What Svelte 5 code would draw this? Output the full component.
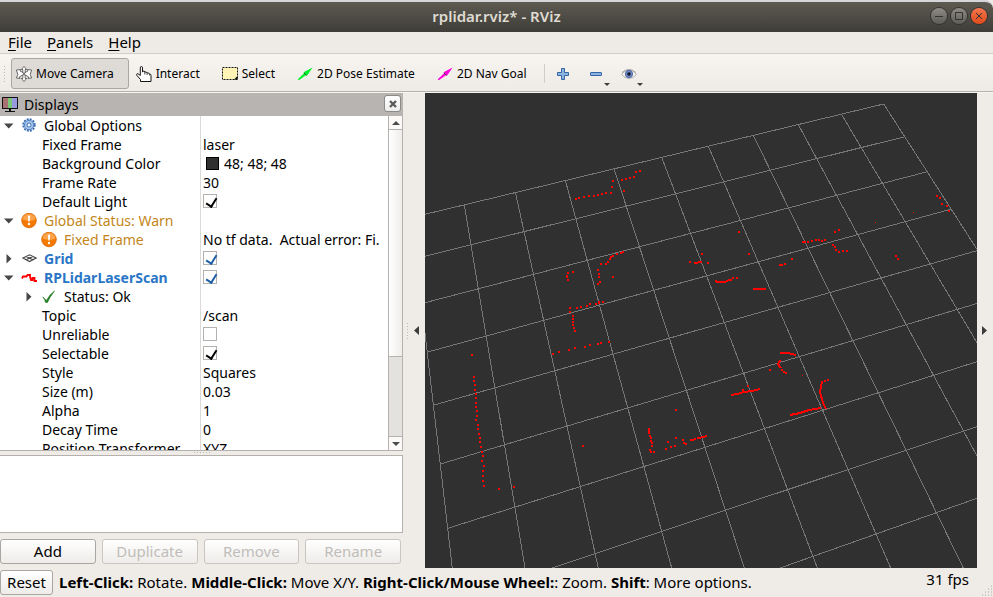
<script>
  const menus = ['File', 'Panels', 'Help'];
  const tools = [
    { icon: 'move', label: 'Move Camera' },
    { icon: 'hand', label: 'Interact' },
    { icon: 'select', label: 'Select' },
    { icon: 'arrow', label: '2D Pose Estimate', color: '#00f02c' },
    { icon: 'arrow', label: '2D Nav Goal', color: '#ff00dc' }
  ];
  let activeTool = $state('Move Camera');

  let rows = $state([
    { level: 0, open: true, icon: 'gear', name: 'Global Options' },
    { level: 1, name: 'Fixed Frame', value: 'laser' },
    { level: 1, name: 'Background Color', value: '48; 48; 48', swatch: true },
    { level: 1, name: 'Frame Rate', value: '30' },
    { level: 1, name: 'Default Light', check: true, on: true },
    { level: 0, open: true, icon: 'warn', name: 'Global Status: Warn', tone: 'warning' },
    { level: 1, icon: 'warn', name: 'Fixed Frame', tone: 'warning', value: 'No tf data.  Actual error: Fi.' },
    { level: 0, open: false, icon: 'grid', name: 'Grid', tone: 'display', check: true, on: true },
    { level: 0, open: true, icon: 'scan', name: 'RPLidarLaserScan', tone: 'display', check: true, on: true },
    { level: 1, open: false, icon: 'ok', name: 'Status: Ok' },
    { level: 1, name: 'Topic', value: '/scan' },
    { level: 1, name: 'Unreliable', check: true, on: false },
    { level: 1, name: 'Selectable', check: true, on: true },
    { level: 1, name: 'Style', value: 'Squares' },
    { level: 1, name: 'Size (m)', value: '0.03' },
    { level: 1, name: 'Alpha', value: '1' },
    { level: 1, name: 'Decay Time', value: '0' },
    { level: 1, name: 'Position Transformer', value: 'XYZ' }
  ]);

  const gridLines = [
    [0, 121.3, 458.7, 11], [0, 163.3, 478.7, 44], [0, 209.7, 502.3, 78.7], [2.7, 259, 526.7, 116],
    [8.3, 312.3, 552, 157.7], [15.3, 371, 552, 210.5], [22.7, 435.3, 552, 268.7],
    [126.7, 475, 552, 333.7], [355, 475, 552, 405.3],
    [0, 240, 27.3, 475], [39.3, 112, 100, 475], [90.3, 99, 173.3, 475], [140.3, 87.3, 246.7, 475],
    [189, 75.7, 319.3, 475], [236.7, 64.3, 392.3, 475], [283.3, 53.3, 465.7, 475],
    [328.3, 42.3, 538.3, 475], [373, 31, 552, 363], [416.3, 21, 552, 249.7], [458.7, 11, 552, 156.3]
  ];

  // Centre of every laser hit.
  const scan = `
    151 106,154 105,159 104,164 103,169 103,173 102,177 101,181 100,186 100,187 94,188 88,199 98,197 87,201 86,205 85,209 84,211 79,215 78,
    198 159,196 160,192 161,188 163,186 164,185 166,183 169,181 171,176 171,173 177,174 181,174 184,175 189,173 191,188 184,
    148 179,143 180,142 183,142 184,143 187,
    178 209,174 210,174 209,171 211,165 211,162 213,156 214,152 215,145 215,145 219,148 223,148 226,148 229,148 232,149 235,150 238,
    128 261,134 259,144 257,150 255,160 254,165 252,173 251,176 250,184 249,47 262,
    49 284,49 288,50 292,50 297,51 301,51 305,51 310,51 314,52 318,52 323,51 327,53 332,53 336,54 341,55 345,55 349,56 354,57 359,
    58 363,57 368,59 373,58 378,58 383,58 388,59 393,74 396,89 394,158 353,251 317,
    224 336,224 338,224 340,225 343,226 345,226 348,227 350,227 353,225 357,226 359,229 359,
    241 356,246 354,250 353,243 349,251 345,258 347,259 350,261 351,266 347,268 347,270 346,273 345,275 345,277 344,279 344,281 343,
    314 139,324 161,277 161,265 169,270 170,272 170,274 169,276 169,283 170,
    291 188,292 189,294 189,296 189,298 189,300 189,302 188,304 187,306 187,308 185,312 185,
    355 172,357 172,360 171,367 166,378 149,380 149,383 149,387 148,391 147,394 147,397 148,400 147,410 139,414 137,
    408 152,410 154,411 157,414 159,418 158,422 158,471 163,473 166,
    512 103,515 105,517 111,522 113,524 118,
    355 268,353 271,354 273,357 277,359 279,361 280,345 277,400 288,403 287,318 297,323 293
  `.split(',').map((p) => p.trim().split(' ').map(Number));

  // Distant hits only one pixel wide.
  const faintScan = [[450, 129], [488, 119], [377, 282]];

  const walls = [
    '328,196 341,196',
    '355,260 363,260 371,262',
    '355,267 353,271 356,275',
    '306,302 312,301 319,299 327,298 335,296',
    '397,288 395,299 398,310 401,316',
    '365,322 375,320 384,317 396,315'
  ];
</script>

{#snippet caret(open)}
  <svg class="caret" viewBox="0 0 10 10" aria-hidden="true">
    <path d={open ? 'M0 2.500h9.500L4.750 7.500z' : 'M2.500 0v9.500L7.500 4.750z'} fill="#474747" />
  </svg>
{/snippet}

{#snippet icon(name, color)}
  <svg class="icon" viewBox="0 0 16 16" aria-hidden="true">
    {#if name === 'move'}
      <g fill="#fff" stroke="#4a4a4a" stroke-width=".8">
        <path d="M8 .5l2.600 3H9.200v2.800L8 8 6.800 6.300V3.500H5.400zM8 15.500l-2.600-3h1.400V9.700L8 8l1.200 1.700v2.800h1.400z" />
        <path d="M.4 4l4.400-.5-.8 1.400 3.400 2L8 8l-1.500 1-3.300 2 .8 1.400L.4 12l1.400-3.600zM15.600 4l-4.400-.5.8 1.400-3.400 2L8 8l1.500 1 3.300 2-.8 1.400 3.600-.4-1.400-3.600z" />
      </g>
      <circle cx="8" cy="8" r="1.200" fill="#777" />
    {:else if name === 'hand'}
      <path d="M4.500 15.500v-2L.9 9.500q-.8-1.800.8-1.900l2.600 1.800V1.900q0-1.400 1.100-1.400t1.100 1.400v4.200V5.300q2.100-.8 2.300.7 2-.5 2.300 1 2.200-.3 2.700 1 1.200 0 1.200 1.600v5.900z" fill="#fff" stroke="#161616" />
      <path d="M8.800 6v2.500M11.100 7v2M13.600 8v1.500" stroke="#222" stroke-width=".8" />
    {:else if name === 'select'}
      <rect x=".5" y="1.500" width="15" height="12" fill="#fff3b5" stroke="#161616" stroke-dasharray="2 1" />
      <path d="M15.500 10v3.500H12z" fill="#111" />
    {:else if name === 'arrow'}
      <path d="M.8 13.200L7 7.200l-.5-.9L15.600 1.500 10 9.800l-1-.5-7.200 5z" fill={color} />
      <path d="M7 7l2.500 2.300" stroke="#24602c" stroke-width="1" />
    {:else if name === 'plus'}
      <path d="M6.500 2.500h3v4h4v3h-4v4h-3v-4h-4v-3h4z" fill="#8db4de" stroke="#3465a4" />
    {:else if name === 'minus'}
      <rect x="2.500" y="6.500" width="11" height="3" rx=".5" fill="#8db4de" stroke="#3465a4" />
    {:else if name === 'eye'}
      <path d="M.5 8.500Q4 3.500 8 3.500t7.500 5Q12 12.500 8 12.500T.5 8.500z" fill="#f4f4f2" stroke="#b3b3b0" />
      <path d="M1 6.500q7-6 14 0" fill="none" stroke="#a8a8a6" />
      <circle cx="8" cy="8" r="3.700" fill="#7189c5" stroke="#495e9c" stroke-width=".8" />
      <circle cx="8" cy="8" r="1.800" fill="#101528" />
    {:else if name === 'monitor'}
      <rect x="0" y="0" width="16" height="12" rx=".6" fill="#111" />
      <path d="M1 1h5v10H1z" fill="#a97171" /><path d="M6 1h4v10H6z" fill="#79c979" /><path d="M10 1h5v10h-5z" fill="#9999df" />
      <path d="M7 12h2v2h4v1H3v-1h4z" fill="#111" />
    {:else if name === 'gear'}
      <circle cx="8" cy="7" r="5.800" fill="none" stroke="#3668ad" stroke-width="1.800" stroke-dasharray="1.900 1.140" />
      <circle cx="8" cy="7" r="4.700" fill="#a7c5ec" stroke="#4a7fc4" stroke-width="1" />
      <circle cx="8" cy="7" r="2" fill="#fff" stroke="#3c70b4" />
    {:else if name === 'warn'}
      <circle cx="8" cy="7.500" r="7.300" fill="#f57900" stroke="#d96500" stroke-width=".8" />
      <path d="M1.500 6.500Q2 1 8 1T14.500 6.500Q9 9 1.500 6.500z" fill="#fba44b" />
      <path d="M6.900 2.800h2.200l-.4 5.700H7.300z" fill="#fff" /><circle cx="8" cy="11" r="1.200" fill="#fff" />
    {:else if name === 'grid'}
      <path d="M2 7l6.500-3.200L15 7l-6.500 3.500zM5.200 5.400l6.600 3.400M11.800 5.400L5.200 8.800" fill="none" stroke="#484848" stroke-width="1.200" />
    {:else if name === 'scan'}
      <path d="M1 8.500l1-2h3.500l1-1.500h2.500v1.500l1 3.500h1.500V8h2v3h2.500" fill="none" stroke="#f00" stroke-width="1.800" />
    {:else if name === 'ok'}
      <path d="M1.800 8l3.600 3.400Q8.500 5.500 13.500 2 8.800 8 6.400 13.500H4.600Q3.800 10.300 1.800 8z" fill="#1d7b1d" stroke="#1d7b1d" stroke-width=".6" />
    {/if}
  </svg>
{/snippet}

<div class="window">
  <header class="titlebar">
    <h1>rplidar.rviz* - RViz</h1>
    <div class="controls">
      <button aria-label="Minimize"><svg viewBox="0 0 16 16"><path d="M4 8.500h8" /></svg></button>
      <button aria-label="Maximize"><svg viewBox="0 0 16 16"><path d="M4.500 4.500h7v7h-7z" /></svg></button>
      <button class="close" aria-label="Close"><svg viewBox="0 0 16 16"><path d="M5 5l6 6M11 5l-6 6" /></svg></button>
    </div>
  </header>

  <nav class="menubar">
    {#each menus as menu}
      <button><u>{menu[0]}</u>{menu.slice(1)}</button>
    {/each}
  </nav>

  <div class="toolbar" role="toolbar" aria-label="Tools">
    <span class="dots tall"></span>
    {#each tools as tool}
      <button class="tool" class:active={activeTool === tool.label} onclick={() => (activeTool = tool.label)}>
        {@render icon(tool.icon, tool.color)}{tool.label}
      </button>
    {/each}
    <span class="separator"></span>
    <button class="small" aria-label="Add tool">{@render icon('plus')}</button>
    <button class="small drop" aria-label="Remove tool">{@render icon('minus')}</button>
    <button class="small drop" aria-label="Tool visibility">{@render icon('eye')}</button>
  </div>

  <main>
    <section class="dock">
      <div class="dock-title">
        {@render icon('monitor')}
        <h2>Displays</h2>
        <button aria-label="Close Displays">
          <svg viewBox="0 0 8 8"><path d="M1 1l6 6M7 1L1 7" stroke="#5b5b5b" stroke-width="2.400" /></svg>
        </button>
      </div>

      <div class="tree">
        <div class="tree-view">
          <table aria-label="Displays">
            <tbody>
              {#each rows as row, i}
                <tr>
                  <td class="name">
                    <div class="cell level{row.level} {row.tone ?? ''}">
                      {#if row.icon}
                        <span class="toggle">{#if row.open !== undefined}{@render caret(row.open)}{/if}</span>
                        {@render icon(row.icon)}
                      {/if}
                      <label class:plain={!row.icon} for={row.check ? `property-${i}` : undefined}>{row.name}</label>
                    </div>
                  </td>
                  <td class="value">
                    <div class="cell">
                      {#if row.check}
                        <input type="checkbox" id="property-{i}" class={row.tone} bind:checked={row.on} />
                      {:else}
                        {#if row.swatch}<span class="swatch"></span>{/if}{row.value ?? ''}
                      {/if}
                    </div>
                  </td>
                </tr>
              {/each}
            </tbody>
          </table>
        </div>
        <div class="scrollbar">
          <button aria-label="Scroll up"><svg viewBox="0 0 8 4"><path d="M0 4L4 0l4 4z" /></svg></button>
          <div class="thumb"></div>
          <div class="trough"></div>
          <button aria-label="Scroll down"><svg viewBox="0 0 8 4"><path d="M0 0l4 4 4-4z" /></svg></button>
        </div>
      </div>

      <div class="splitter"><span class="dots wide"></span></div>
      <div class="description"></div>

      <div class="actions">
        <button>Add</button>
        <button disabled>Duplicate</button>
        <button disabled>Remove</button>
        <button disabled>Rename</button>
      </div>
    </section>

    <button class="collapse left" aria-label="Hide left dock">
      <span class="dots middle"></span>
      <svg viewBox="0 0 5 9"><path d="M5 0v9L0 4.500z" /></svg>
    </button>

    <svg class="scene" viewBox="0 0 552 475" preserveAspectRatio="xMinYMin slice" role="img" aria-label="Laser scan view">
      <g stroke="#767676" shape-rendering="crispEdges">
        {#each gridLines as [x1, y1, x2, y2]}
          <line {x1} {y1} {x2} {y2} />
        {/each}
      </g>
      <g fill="#f00" shape-rendering="crispEdges">
        {#each scan as [x, y]}
          <rect x={x - 1} y={y - 1} width="2" height="2" />
        {/each}
        {#each faintScan as [x, y]}
          <rect {x} {y} width="1" height="1" />
        {/each}
      </g>
      <g fill="none" stroke="#f00" stroke-width="2" shape-rendering="crispEdges">
        {#each walls as points}
          <polyline {points} />
        {/each}
      </g>
    </svg>

    <button class="collapse right" aria-label="Hide right dock">
      <svg viewBox="0 0 5 9"><path d="M0 0v9l5-4.500z" /></svg>
    </button>
  </main>

  <footer>
    <button>Reset</button>
    <p><b>Left-Click:</b> Rotate. <b>Middle-Click:</b> Move X/Y. <b>Right-Click/Mouse Wheel:</b>: Zoom. <b>Shift</b>: More options.</p>
    <output>31 fps</output>
    <svg class="grip" viewBox="0 0 12 12" aria-hidden="true">
      <path d="M10 1h1M7 4h1M10 4h1M4 7h1M7 7h1M10 7h1M1 10h1M4 10h1M7 10h1M10 10h1" stroke="#aaa6a0" />
    </svg>
  </footer>
</div>

<style>
  :global(body) { margin: 0; }
  * { box-sizing: border-box; }
  .window {
    display: flex; flex-direction: column; height: 100vh; overflow: hidden;
    background: #efebe7; color: #000; font: 14px/19px "Noto Sans", "Open Sans", sans-serif;
  }
  button { font: inherit; color: inherit; border: 0; background: none; padding: 0; margin: 0; }
  svg { display: block; flex: none; }
  h1, h2, p { margin: 0; }
  .icon { width: 16px; height: 16px; }

  .titlebar {
    display: flex; align-items: center; justify-content: center; position: relative;
    height: 32px; flex: none; padding-bottom: 2px;
    border-top: 2px solid #d5d5da; border-radius: 0 8px 0 0;
    background: linear-gradient(#5d5a51, #3e3d38);
  }
  h1 { font-size: 15px; line-height: 19px; font-weight: 600; color: #dfdbd2; }
  .controls { position: absolute; right: 6px; top: 6px; display: flex; gap: 4px; }
  .controls button {
    width: 16px; height: 16px; border-radius: 50%;
    background: linear-gradient(#8d8b84, #5e5c56); box-shadow: 0 0 0 1px #33322e;
  }
  .controls svg { width: 16px; height: 16px; fill: none; stroke: #33322e; }
  .controls .close { background: linear-gradient(#f4774f, #df4a1b); }

  .menubar {
    display: flex; gap: 15px; height: 22px; flex: none; padding-left: 8px;
    background: #eeebe6; border-bottom: 1px solid #d1cdc8; font-size: 15px;
  }
  .menubar u { text-underline-offset: 2px; }

  .toolbar {
    display: flex; align-items: center; height: 38px; flex: none; padding: 2px 0 0 3px; margin-bottom: 1px;
    background: linear-gradient(#f8f5f1, #eeebe6); border-bottom: 1px solid #b5b1ae;
    box-shadow: 0 1px #f7f5f2;
  }
  .dots { background: radial-gradient(circle, #bcb8b3 1px, transparent 1px) 0 0 / 3px 3px; }
  .tall { width: 4px; height: 18px; margin-right: 4px; }
  .tool {
    display: flex; align-items: center; gap: 4px; height: 31px; margin-right: 2px; padding: 0 14px 0 4px;
    border: 1px solid transparent; border-radius: 3px; font-size: 12px; line-height: 18px; white-space: nowrap;
  }
  .tool.active { background: #dedad6; border-color: #aaa6a2; }
  .separator { width: 1px; height: 19px; margin: 0 10px 0 0; background: #d0ccc7; }
  .small { position: relative; padding-right: 17px; }
  .drop::after {
    content: ""; position: absolute; left: 16px; top: 17px;
    border: 3px solid transparent; border-top-color: #3e3e3e; border-bottom: 0;
  }

  main { display: flex; flex: 1; min-height: 0; }
  .dock { display: flex; flex-direction: column; width: 403px; flex: none; min-height: 0; }
  .dock-title { display: flex; align-items: center; gap: 6px; height: 23px; flex: none; padding: 0 2px; background: #b8b4b1; }
  h2 { flex: 1; font-size: 14px; line-height: 19px; font-weight: 400; }
  .dock-title button {
    display: grid; place-items: center; width: 17px; height: 17px; margin-bottom: 2px;
    border: 1px solid #8d8986; border-radius: 3px; background: linear-gradient(#fff, #eee);
  }
  .dock-title button svg { width: 8px; height: 8px; }

  .tree {
    display: flex; flex: 1; min-height: 0; background: #fff;
    border-right: 1px solid #b5b1ae; border-bottom: 1px solid #b5b1ae;
  }
  .tree-view { flex: 1; min-width: 0; overflow: hidden; }
  table { width: 100%; table-layout: fixed; border-collapse: separate; border-spacing: 0; }
  td { padding: 0; }
  .name { width: 201px; border-right: 1px solid #dcdad8; }
  .cell { display: flex; align-items: center; height: 19px; overflow: hidden; white-space: pre; }
  .value .cell { padding-left: 2px; }
  .level1 { padding-left: 20px; }
  .toggle { width: 18px; padding-left: 4px; margin-right: 3px; }
  .caret { width: 10px; height: 10px; }
  .cell label { margin-left: 7px; }
  .cell label.plain { margin-left: 22px; }
  .warning { color: #c4861a; }
  .display { color: #2a76c6; font-weight: 700; }
  .swatch { width: 13px; height: 13px; margin: 0 5px 0 3px; border: 1px solid #000; background: #303030; }
  input {
    appearance: none; width: 14px; height: 14px; margin: 0 0 2px; border: 1px solid #b5b1ae; background: #fff; color: #000;
  }
  input.display { color: #1d5fa5; }
  input:checked::before {
    content: ""; display: block; width: 5px; height: 9px; margin: 1px 0 0 4px;
    border: solid currentColor; border-width: 0 2px 2px 0; transform: rotate(32deg);
  }

  .scrollbar { display: flex; flex-direction: column; width: 14px; flex: none; border-left: 1px solid #b5b1ae; }
  .scrollbar button { display: grid; place-items: center; height: 13px; background: #fbfaf9; }
  .scrollbar svg { width: 8px; height: 4px; fill: #4c4c4c; }
  .thumb { flex: 227; border: solid #b5b1ae; border-width: 1px 0; background: linear-gradient(90deg, #fff, #efedea); }
  .trough { flex: 79; background: #e4e2df; border-bottom: 1px solid #b5b1ae; }

  .splitter { display: flex; justify-content: center; height: 4px; flex: none; }
  .wide { width: 18px; height: 3px; }
  .description { height: 78px; flex: none; background: #fff; border: 1px solid #b5b1ae; border-left: 0; }
  .actions { display: flex; gap: 6px; padding: 6px 2px 4px 0; font-size: 15px; }
  .actions button, footer button {
    height: 25px; border: 1px solid #aaa6a2; border-radius: 3px; background: linear-gradient(#fff, #eeece9);
  }
  .actions button { flex: 1 1 0; min-width: 0; }
  .actions button:disabled { color: #c0bdb9; border-color: #c9c5c1; }

  .collapse { display: flex; align-items: center; flex: none; }
  .collapse svg { width: 5px; height: 9px; fill: #3c3c3c; }
  .left { width: 22px; gap: 6px; padding-left: 3px; }
  .right { width: 16px; padding-left: 5px; }
  .middle { width: 2px; height: 18px; }
  .scene { flex: 1; min-width: 0; height: 100%; background: #303030; }

  footer { display: flex; align-items: center; height: 29px; flex: none; position: relative; font-size: 15px; }
  footer button { width: 53px; }
  footer p { flex: 1; margin-left: 6px; white-space: nowrap; }
  output { margin-right: 24px; padding-bottom: 6px; }
  .grip { position: absolute; right: 0; bottom: 0; width: 12px; height: 12px; }
</style>
